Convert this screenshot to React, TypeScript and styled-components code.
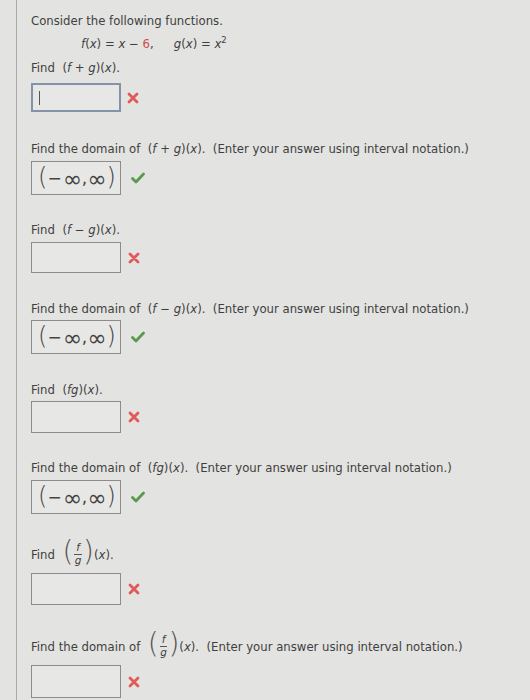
import React from "react";
import styled, { createGlobalStyle } from "styled-components";

const Global = createGlobalStyle`
  html, body { margin: 0; padding: 0; background: #e3e3e1; }
  body { font-family: "DejaVu Sans", Verdana, sans-serif; color: #3f3f3f; }
`;

const Page = styled.div`
  margin-left: 16px;
  border-left: 1px solid #a9a9a9;
  padding-left: 14px;
  display: flex;
  flex-direction: column;
  align-items: flex-start;
  box-sizing: border-box;
  overflow: hidden;
  height: 700px;
`;

const Line = styled.div<{ $mt: number }>`
  margin-top: ${(p) => p.$mt}px;
  font-size: 11.7px;
  line-height: 16px;
  white-space: pre;
`;

const Formula = styled(Line)`
  padding-left: 50px;
`;

const M = styled.span`
  font-style: italic;
`;

const Red = styled.span`
  color: #d24a4a;
`;

const Sup = styled.sup`
  font-size: 8.5px;
  line-height: 0;
  vertical-align: 5px;
`;

const Gap = styled.span<{ $w: number }>`
  display: inline-block;
  width: ${(p) => p.$w}px;
`;

const Row = styled.div<{ $mt: number }>`
  margin-top: ${(p) => p.$mt}px;
  display: flex;
  align-items: center;
`;

const Box = styled.div<{ $h: number; $focus?: boolean }>`
  width: 90px;
  height: ${(p) => p.$h}px;
  box-sizing: border-box;
  border: ${(p) => (p.$focus ? "2px solid #8593a8" : "1px solid #8c8c8c")};
  background: #e7e7e5;
  display: flex;
  align-items: center;
  padding-left: 6px;
`;

const Caret = styled.div`
  width: 1px;
  height: 14px;
  background: #555;
`;

const Interval = styled.div`
  font-size: 17px;
  color: #444;
  display: flex;
  align-items: center;
`;

const Paren = styled.span`
  font-size: 24px;
  font-weight: 300;
  line-height: 1;
  position: relative;
  top: -1px;
`;

const Inf = styled.span`
  font-size: 23px;
  line-height: 1;
  position: relative;
  top: 1px;
`;

const Minus = styled.span`
  font-size: 17px;
  margin-right: 1px;
`;

const Mark = styled.span<{ $ml: number }>`
  margin-left: ${(p) => p.$ml}px;
  display: inline-flex;
`;

const Frac = styled.span`
  display: inline-flex;
  align-items: center;
  font-style: normal;
  vertical-align: middle;
  position: relative;
  top: -1px;
`;

const BigParen = styled.span`
  font-size: 28px;
  font-weight: 200;
  line-height: 28px;
  position: relative;
  top: -2px;
  color: #555;
`;

const FracBody = styled.span`
  display: inline-flex;
  flex-direction: column;
  align-items: center;
  font-size: 10.5px;
  line-height: 11px;
  font-style: italic;
  margin: 0 1px;
`;

const FracTop = styled.span`
  border-bottom: 1px solid #555;
  padding: 0 2px 1px;
`;

const Cross = () => (
  <svg width="12" height="12" viewBox="0 0 12 12">
    <path d="M2 2 L10 10 M10 2 L2 10" stroke="#e05a5a" strokeWidth="2.8" strokeLinecap="round" />
  </svg>
);

const Check = () => (
  <svg width="14" height="12" viewBox="0 0 14 12">
    <path d="M1.5 6.5 L5 10 L12.5 2" stroke="#5a9a4c" strokeWidth="2.8" fill="none" strokeLinecap="round" strokeLinejoin="round" />
  </svg>
);

const FG = () => (
  <Frac>
    <BigParen>(</BigParen>
    <FracBody>
      <FracTop>f</FracTop>
      <span>g</span>
    </FracBody>
    <BigParen>)</BigParen>
  </Frac>
);

const IntervalValue = () => (
  <Interval>
    <Paren>(</Paren>
    <Minus>−</Minus>
    <Inf>∞</Inf>,<Inf>∞</Inf>
    <Paren>)</Paren>
  </Interval>
);

const Note = "  (Enter your answer using interval notation.)";

export default function App() {
  return (
    <>
      <Global />
      <Page>
        <Line $mt={13}>Consider the following functions.</Line>
        <Formula $mt={7}>
          <M>f</M>(<M>x</M>) = <M>x</M> − <Red>6</Red>,<Gap $w={20} />
          <M>g</M>(<M>x</M>) = <M>x</M>
          <Sup>2</Sup>
        </Formula>
        <Line $mt={8}>
          Find  (<M>f</M> + <M>g</M>)(<M>x</M>).
        </Line>
        <Row $mt={7}>
          <Box $h={29} $focus>
            <Caret />
          </Box>
          <Mark $ml={6}>
            <Cross />
          </Mark>
        </Row>

        <Line $mt={29}>
          Find the domain of  (<M>f</M> + <M>g</M>)(<M>x</M>).{Note}
        </Line>
        <Row $mt={4}>
          <Box $h={34}>
            <IntervalValue />
          </Box>
          <Mark $ml={10}>
            <Check />
          </Mark>
        </Row>

        <Line $mt={27}>
          Find  (<M>f</M> − <M>g</M>)(<M>x</M>).
        </Line>
        <Row $mt={4}>
          <Box $h={31} />
          <Mark $ml={7}>
            <Cross />
          </Mark>
        </Row>

        <Line $mt={28}>
          Find the domain of  (<M>f</M> − <M>g</M>)(<M>x</M>).{Note}
        </Line>
        <Row $mt={3}>
          <Box $h={34}>
            <IntervalValue />
          </Box>
          <Mark $ml={10}>
            <Check />
          </Mark>
        </Row>

        <Line $mt={28}>
          Find  (<M>fg</M>)(<M>x</M>).
        </Line>
        <Row $mt={3}>
          <Box $h={32} />
          <Mark $ml={7}>
            <Cross />
          </Mark>
        </Row>

        <Line $mt={27}>
          Find the domain of  (<M>fg</M>)(<M>x</M>).{Note}
        </Line>
        <Row $mt={4}>
          <Box $h={34}>
            <IntervalValue />
          </Box>
          <Mark $ml={10}>
            <Check />
          </Mark>
        </Row>

        <Line $mt={27}>
          Find  <FG />(<M>x</M>).
        </Line>
        <Row $mt={4}>
          <Box $h={32} />
          <Mark $ml={7}>
            <Cross />
          </Mark>
        </Row>

        <Line $mt={28}>
          Find the domain of  <FG />(<M>x</M>).{Note}
        </Line>
        <Row $mt={4}>
          <Box $h={33} />
          <Mark $ml={7}>
            <Cross />
          </Mark>
        </Row>
      </Page>
    </>
  );
}
